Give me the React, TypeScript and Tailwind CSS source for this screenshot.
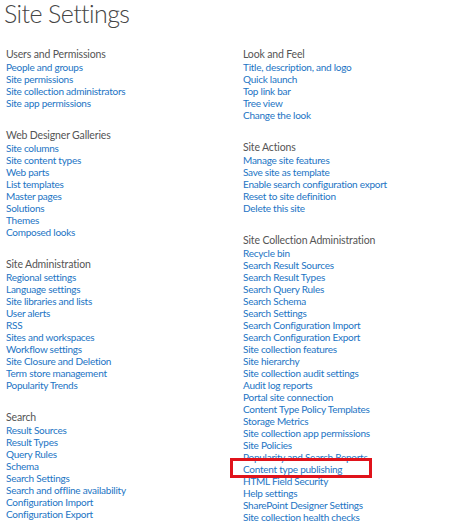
const leftSections = [
  {
    title: "Users and Permissions",
    links: ["People and groups", "Site permissions", "Site collection administrators", "Site app permissions"],
  },
  {
    title: "Web Designer Galleries",
    links: ["Site columns", "Site content types", "Web parts", "List templates", "Master pages", "Solutions", "Themes", "Composed looks"],
  },
  {
    title: "Site Administration",
    links: [
      "Regional settings",
      "Language settings",
      "Site libraries and lists",
      "User alerts",
      "RSS",
      "Sites and workspaces",
      "Workflow settings",
      "Site Closure and Deletion",
      "Term store management",
      "Popularity Trends",
    ],
  },
  {
    title: "Search",
    links: [
      "Result Sources",
      "Result Types",
      "Query Rules",
      "Schema",
      "Search Settings",
      "Search and offline availability",
      "Configuration Import",
      "Configuration Export",
    ],
  },
];

const rightSections = [
  {
    title: "Look and Feel",
    links: ["Title, description, and logo", "Quick launch", "Top link bar", "Tree view", "Change the look"],
  },
  {
    title: "Site Actions",
    links: ["Manage site features", "Save site as template", "Enable search configuration export", "Reset to site definition", "Delete this site"],
  },
  {
    title: "Site Collection Administration",
    links: [
      "Recycle bin",
      "Search Result Sources",
      "Search Result Types",
      "Search Query Rules",
      "Search Schema",
      "Search Settings",
      "Search Configuration Import",
      "Search Configuration Export",
      "Site collection features",
      "Site hierarchy",
      "Site collection audit settings",
      "Audit log reports",
      "Portal site connection",
      "Content Type Policy Templates",
      "Storage Metrics",
      "Site collection app permissions",
      "Site Policies",
      "Popularity and Search Reports",
      "Content type publishing",
      "HTML Field Security",
      "Help settings",
      "SharePoint Designer Settings",
      "Site collection health checks",
    ],
  },
];

type Section = { title: string; links: string[] };

function SettingsColumn({ sections }: { sections: Section[] }) {
  return (
    <div className="flex flex-col gap-[20px]">
      {sections.map((s) => (
        <div key={s.title}>
          <h2 className="text-[10.5px] leading-[13px] tracking-[-0.15px] text-[#555]">{s.title}</h2>
          <ul>
            {s.links.map((l) => (
              <li key={l} className="text-[10px] leading-[12px] tracking-[-0.25px] text-[#2274c4] whitespace-nowrap">
                {l === "Content type publishing" ? (
                  <span className="relative">
                    <a href="#">{l}</a>
                    {/* highlight annotation */}
                    <span className="absolute left-[-13px] top-[-5px] w-[142px] h-[20px] border-[3px] border-[#e0131b]" />
                  </span>
                ) : (
                  <a href="#">{l}</a>
                )}
              </li>
            ))}
          </ul>
        </div>
      ))}
    </div>
  );
}

export default function App() {
  return (
    <div className="w-[474px] h-[524px] overflow-hidden bg-white font-['Lato',sans-serif]">
      <h1 className="pl-[4px] mt-[-3px] text-[25px] leading-[32px] tracking-[-0.6px] font-light text-[#444]">
        Site Settings
      </h1>
      <div className="grid grid-cols-[237px_1fr] pl-[6px] mt-[19px]">
        <SettingsColumn sections={leftSections} />
        <SettingsColumn sections={rightSections} />
      </div>
    </div>
  );
}
